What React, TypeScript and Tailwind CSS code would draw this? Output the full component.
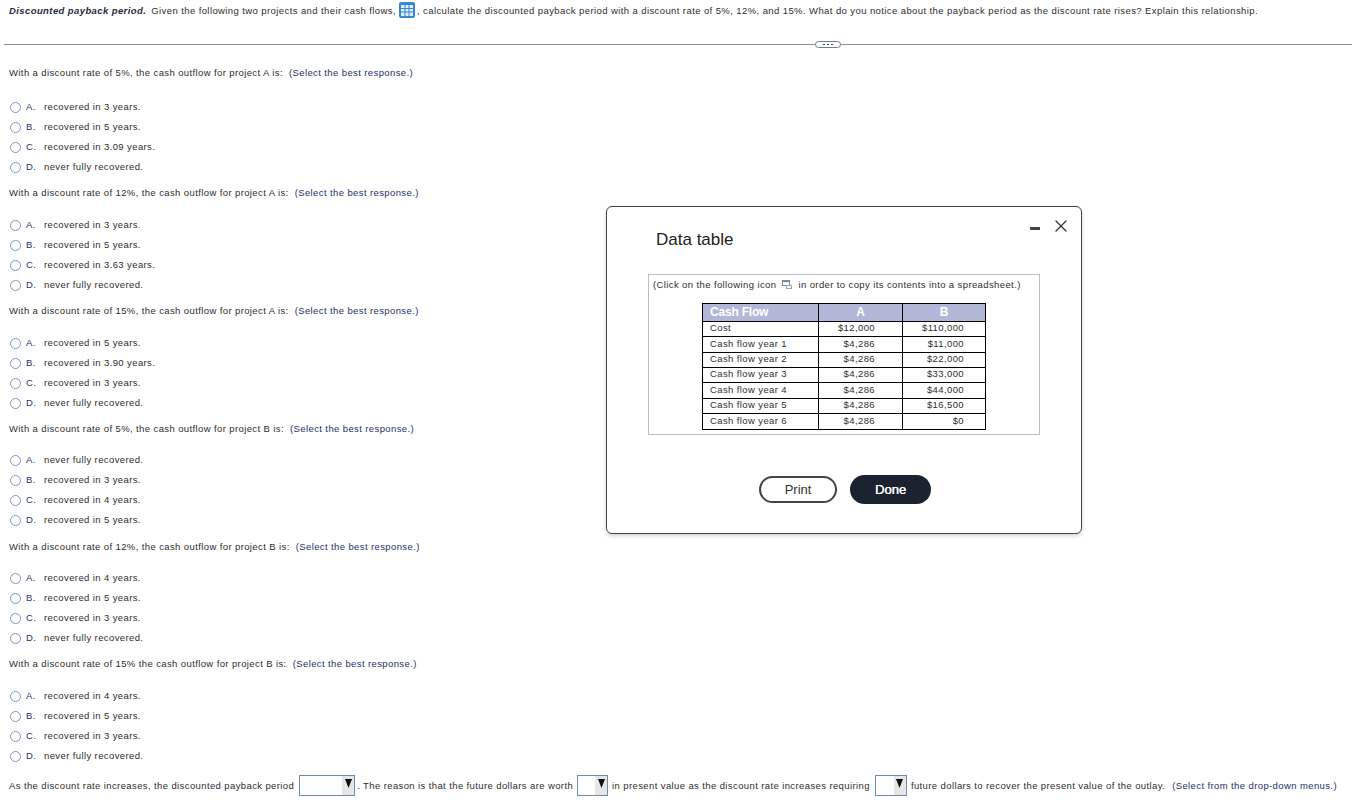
import { X } from "lucide-react";

const font = { fontFamily: '"Liberation Sans", Arial, sans-serif' };

const questions = [
  {
    text: "With a discount rate of 5%, the cash outflow for project A is:",
    gap: "",
    top: "mt-[22px]",
    options: ["recovered in 3 years.", "recovered in 5 years.", "recovered in 3.09 years.", "never fully recovered."],
  },
  {
    text: "With a discount rate of 12%, the cash outflow for project A is:",
    gap: "mt-[14px]",
    top: "mt-[20px]",
    options: ["recovered in 3 years.", "recovered in 5 years.", "recovered in 3.63 years.", "never fully recovered."],
  },
  {
    text: "With a discount rate of 15%, the cash outflow for project A is:",
    gap: "mt-[14px]",
    top: "mt-[20px]",
    options: ["recovered in 5 years.", "recovered in 3.90 years.", "recovered in 3 years.", "never fully recovered."],
  },
  {
    text: "With a discount rate of 5%, the cash outflow for project B is:",
    gap: "mt-[14px]",
    top: "mt-[19px]",
    options: ["never fully recovered.", "recovered in 3 years.", "recovered in 4 years.", "recovered in 5 years."],
  },
  {
    text: "With a discount rate of 12%, the cash outflow for project B is:",
    gap: "mt-[15px]",
    top: "mt-[19px]",
    options: ["recovered in 4 years.", "recovered in 5 years.", "recovered in 3 years.", "never fully recovered."],
  },
  {
    text: "With a discount rate of 15% the cash outflow for project B is:",
    gap: "mt-[14px]",
    top: "mt-[20px]",
    options: ["recovered in 4 years.", "recovered in 5 years.", "recovered in 3 years.", "never fully recovered."],
  },
];

const rows = [
  { h: "h-[15px]", cells: ["Cost", "$12,000", "$110,000"] },
  { h: "h-[16px]", cells: ["Cash flow year 1", "$4,286", "$11,000"] },
  { h: "h-[15px]", cells: ["Cash flow year 2", "$4,286", "$22,000"] },
  { h: "h-[15px]", cells: ["Cash flow year 3", "$4,286", "$33,000"] },
  { h: "h-[16px]", cells: ["Cash flow year 4", "$4,286", "$44,000"] },
  { h: "h-[15px]", cells: ["Cash flow year 5", "$4,286", "$16,500"] },
  { h: "h-[16px]", cells: ["Cash flow year 6", "$4,286", "$0"] },
];

function Dropdown({ width }: { width: string }) {
  return (
    <span className={`inline-flex h-[21px] items-stretch border border-[#6f8cab] bg-white align-middle ${width}`}>
      <span className="flex-1" />
      <span className="flex w-[12px] justify-center bg-[#e6e6e6] pt-[3px]">
        <svg width="7" height="9" viewBox="0 0 7 9">
          <path d="M0 0h7L3.5 9z" fill="#111" />
        </svg>
      </span>
    </span>
  );
}

function GridIcon() {
  return (
    <svg width="16" height="16" viewBox="0 0 16 16" className="ml-[3px] mr-[2px] inline-block align-[-4px]">
      <rect x="0" y="0" width="16" height="16" rx="2" fill="#3b87cf" />
      <rect x="2" y="3" width="12" height="11" fill="#dcecf9" />
      <path d="M2 6.5h12M2 10h12M6 3v11M10 3v11" stroke="#3b87cf" strokeWidth="1" />
    </svg>
  );
}

function CopyIcon() {
  return (
    <svg width="10" height="9" viewBox="0 0 10 9" className="mx-[3px] inline-block align-[-1px]">
      <rect x="0.5" y="0.5" width="7" height="5" fill="#fff" stroke="#7a8aa0" />
      <rect x="0.5" y="0.5" width="7" height="1.6" fill="#7a8aa0" />
      <rect x="4.5" y="5.5" width="5" height="3" fill="#fff" stroke="#9aa6b6" />
    </svg>
  );
}

export default function App() {
  return (
    <div className="relative h-[800px] w-[1352px] overflow-hidden bg-white text-[9.5px] leading-[12px] tracking-[0.39px] text-[#2e2e2e]" style={font}>
      <div className="pl-[9px] pt-[2px] whitespace-nowrap tracking-[0.405px]">
        <b className="mr-[2px] italic text-[#1f2a44]">Discounted payback period.</b> Given the following two projects and their cash flows,
        <GridIcon />, calculate the discounted payback period with a discount rate of 5%, 12%, and 15%. What do you notice about the payback period as the discount rate rises? Explain this relationship.
      </div>

      <div className="relative ml-[4px] mt-[26px] h-px bg-[#8c8c8c]">
        <span className="absolute left-[811px] top-[-3px] flex h-[7px] w-[26px] items-center justify-center gap-[2px] rounded-[4px] border border-[#6f7f8f] bg-white">
          <span className="h-px w-[2px] bg-[#445]" />
          <span className="h-px w-[2px] bg-[#445]" />
          <span className="h-px w-[2px] bg-[#445]" />
        </span>
      </div>

      <div className="pl-[9px] pt-[22px]">
        {questions.map((q, i) => (
          <div key={i} className={q.gap}>
            <div className="h-[12px] whitespace-nowrap">
              {q.text} <span className="ml-[3px] text-[#26306b]">(Select the best response.)</span>
            </div>
            <div className={`flex flex-col gap-[8px] ${q.top}`}>
              {q.options.map((o, j) => (
                <div key={j} className="flex h-[12px] items-center whitespace-nowrap">
                  <span className="ml-[1px] box-border h-[11px] w-[11px] shrink-0 rounded-full border-[1.5px] border-[#7f9ab8] bg-white" />
                  <span className="ml-[5px] w-[18px] text-[#26306b]">{"ABCD"[j]}.</span>
                  <span>{o}</span>
                </div>
              ))}
            </div>
          </div>
        ))}
      </div>

      <div className="mt-[13px] flex items-center whitespace-nowrap pl-[9px]">
        As the discount rate increases, the discounted payback period
        <span className="ml-[5px]"><Dropdown width="w-[56px]" /></span>
        <span className="ml-[2px]">. The reason is that the future dollars are worth</span>
        <span className="ml-[4px]"><Dropdown width="w-[31px]" /></span>
        <span className="ml-[4px]">in present value as the discount rate increases requiring</span>
        <span className="ml-[5px]"><Dropdown width="w-[32px]" /></span>
        <span className="ml-[4px]">future dollars to recover the present value of the outlay.</span>
        <span className="ml-[7px] text-[#26306b]">(Select from the drop-down menus.)</span>
      </div>

      <div className="absolute left-[606px] top-[206px] h-[328px] w-[476px] rounded-[6px] border border-[#444] bg-white shadow-[0_2px_4px_rgba(0,0,0,0.18)]">
        <div className="absolute right-[10px] top-[9px] flex items-center gap-[11px] text-[#333]">
          <span className="mt-[4px] h-[3px] w-[10px] bg-[#444]" />
          <X size={20} strokeWidth={1.5} />
        </div>
        <div className="pl-[49px] pt-[23px] text-[17px] leading-[20px] tracking-normal text-[#222]">Data table</div>
        <div className="ml-[41px] mt-[24px] h-[161px] w-[392px] border border-[#bdbdbd] pl-[4px] pt-[4px]">
          <div className="whitespace-nowrap">
            (Click on the following icon <CopyIcon /> in order to copy its contents into a spreadsheet.)
          </div>
          <table className="ml-[49px] mt-[12px] w-[284px] table-fixed border-collapse border border-black">
            <thead>
              <tr className="h-[18px] bg-[#b3b7d7] text-[12px] font-bold leading-none tracking-[-0.2px] text-white">
                <th className="w-[116px] border border-black pb-[2px] pl-[7px] text-left">Cash Flow</th>
                <th className="w-[84px] border border-black pb-[2px] text-center">A</th>
                <th className="border border-black pb-[2px] text-center">B</th>
              </tr>
            </thead>
            <tbody>
              {rows.map((r) => (
                <tr key={r.cells[0]} className={r.h}>
                  <td className="border border-black pb-[2px] pl-[7px] leading-none">{r.cells[0]}</td>
                  <td className="border border-black pb-[2px] pr-[27px] text-right leading-none">{r.cells[1]}</td>
                  <td className="border border-black pb-[2px] pr-[21px] text-right leading-none">{r.cells[2]}</td>
                </tr>
              ))}
            </tbody>
          </table>
        </div>
        <div className="mt-[40px] flex items-center gap-[13px] pl-[152px] text-[13px] tracking-normal">
          <button className="h-[27px] w-[78px] rounded-full border-2 border-[#444] bg-white text-[#333]">Print</button>
          <button className="h-[29px] w-[81px] rounded-full bg-[#1c2330] text-white [text-shadow:0.4px_0_0_#fff]">Done</button>
        </div>
      </div>
    </div>
  );
}
